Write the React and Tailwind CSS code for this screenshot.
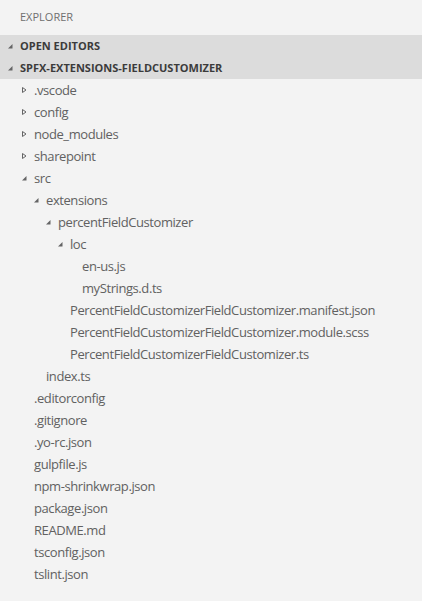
import React from "react";

// 탐색기 트리 데이터
const tree = [
  { name: ".vscode", depth: 0, folder: true, open: false },
  { name: "config", depth: 0, folder: true, open: false },
  { name: "node_modules", depth: 0, folder: true, open: false },
  { name: "sharepoint", depth: 0, folder: true, open: false },
  { name: "src", depth: 0, folder: true, open: true },
  { name: "extensions", depth: 1, folder: true, open: true },
  { name: "percentFieldCustomizer", depth: 2, folder: true, open: true },
  { name: "loc", depth: 3, folder: true, open: true },
  { name: "en-us.js", depth: 4 },
  { name: "myStrings.d.ts", depth: 4 },
  { name: "PercentFieldCustomizerFieldCustomizer.manifest.json", depth: 3 },
  { name: "PercentFieldCustomizerFieldCustomizer.module.scss", depth: 3 },
  { name: "PercentFieldCustomizerFieldCustomizer.ts", depth: 3 },
  { name: "index.ts", depth: 1 },
  { name: ".editorconfig", depth: 0 },
  { name: ".gitignore", depth: 0 },
  { name: ".yo-rc.json", depth: 0 },
  { name: "gulpfile.js", depth: 0 },
  { name: "npm-shrinkwrap.json", depth: 0 },
  { name: "package.json", depth: 0 },
  { name: "README.md", depth: 0 },
  { name: "tsconfig.json", depth: 0 },
  { name: "tslint.json", depth: 0 },
];

const Twistie = ({ open }) =>
  open ? (
    <svg width="12" height="22" viewBox="0 0 12 22">
      <path d="M6.5 9 L6.5 13.5 L2 13.5 Z" fill="#646465" />
    </svg>
  ) : (
    <svg width="12" height="22" viewBox="0 0 12 22">
      <path d="M2.5 8.5 L2.5 13.5 L6 11 Z" fill="none" stroke="#646465" strokeWidth="1" />
    </svg>
  );

const Indent = ["pl-[20px]", "pl-[32px]", "pl-[44px]", "pl-[56px]", "pl-[68px]"];

const Row = ({ item }) => (
  <div className={`flex items-center h-[22px] ${Indent[item.depth]}`}>
    <div className="w-[14px] shrink-0 flex">{item.folder && <Twistie open={item.open} />}</div>
    <span className="text-[13px] tracking-[-0.42px] text-[#616161] whitespace-nowrap leading-[22px]">
      {item.name}
    </span>
  </div>
);

const Header = ({ title }) => (
  <div className="flex items-center h-[22px] pl-[6px]">
    <div className="w-[14px] shrink-0 flex">
      <Twistie open />
    </div>
    <span className="text-[11px] font-bold text-[#3b3b3b] leading-[22px]">{title}</span>
  </div>
);

export default function App() {
  return (
    <div
      className="w-[422px] h-[601px] bg-[#f3f3f3] overflow-hidden"
      style={{ fontFamily: '"Open Sans", "Noto Sans", sans-serif' }}
    >
      <div className="h-[35px] flex items-center pl-[20px]">
        <span className="text-[11px] text-[#6f6f6f]">EXPLORER</span>
      </div>
      <div className="bg-[#dcdcdc]">
        <Header title="OPEN EDITORS" />
        <Header title="SPFX-EXTENSIONS-FIELDCUSTOMIZER" />
      </div>
      <div>
        {tree.map((item) => (
          <Row key={item.name} item={item} />
        ))}
      </div>
    </div>
  );
}
